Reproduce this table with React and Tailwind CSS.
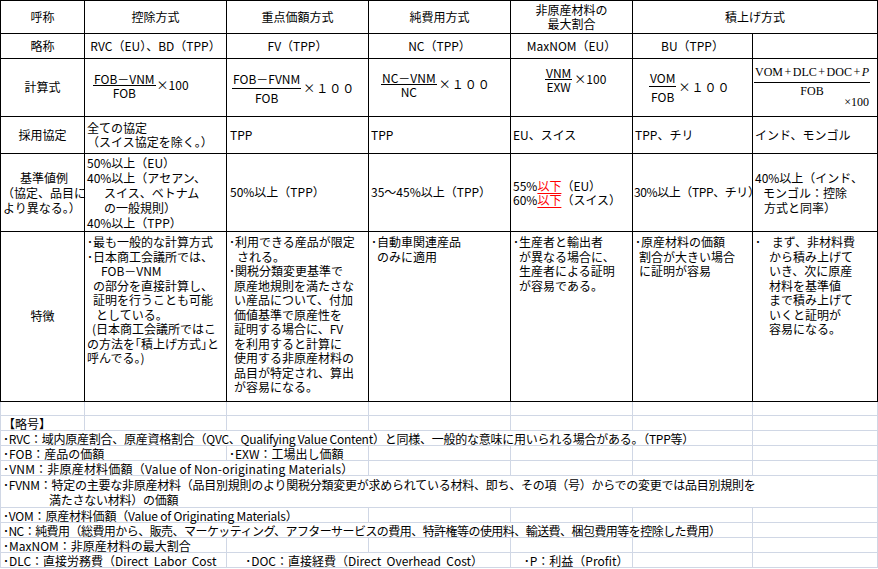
const jp = "font-['Noto_Sans_CJK_JP',sans-serif]";

function Lines({ items, className = "" }) {
  return (
    <div className={className}>
      {items.map(([t, ind, cls], i) => (
        <div key={i} className={"whitespace-pre " + (cls || "")} style={{ paddingLeft: ind || 0 }}>
          {t}
        </div>
      ))}
    </div>
  );
}

function Frac({ num, den, numClass = "", denClass = "" }) {
  return (
    <span className="inline-flex flex-col items-center leading-[13px]">
      <span className={"px-[1px] whitespace-nowrap " + numClass}>{num}</span>
      <span className="self-stretch border-t border-black" />
      <span className={denClass}>{den}</span>
    </span>
  );
}

const Red = ({ children }) => <span className="text-[#ff0000] underline underline-offset-2">{children}</span>;
const Plus = () => <span className="mx-[1.5px]">+</span>;

const td = "border border-black p-0 align-middle";
const tdTop = "border border-black p-0 align-top";
const g = "border border-[#d0d7e5] p-0 align-middle whitespace-pre pl-[2px]";

const lower = [
  { h: "h-[14px]", cells: [[1], [1], [1], [1], [1], [1], [1]] },
  { h: "h-[15px]", cells: [[1, "【略号】"], [1], [1], [1], [1], [1], [1]] },
  {
    h: "h-[15px]",
    cells: [[6, "･RVC：域内原産割合、原産資格割合（QVC、Qualifying Value Content）と同様、一般的な意味に用いられる場合がある。（TPP等）", "tracking-[-0.25px]"], [1]],
  },
  { h: "h-[15px]", cells: [[2, "･FOB：産品の価額"], [1, "･EXW：工場出し価額"], [1], [1], [1], [1]] },
  { h: "h-[15px]", cells: [[3, "･VNM：非原産材料価額（Value of Non-originating Materials）", "tracking-[0.2px]"], [1], [1], [1], [1]] },
  { h: "h-[32px]", fvnm: true, cells: [[7]] },
  { h: "h-[15px]", cells: [[3, "･VOM：原産材料価額（Value of Originating Materials）", "tracking-[-0.2px]"], [1], [1], [1], [1]] },
  {
    h: "h-[15px]",
    cells: [[6, "･NC：純費用（総費用から、販売、マーケッティング、アフターサービスの費用、特許権等の使用料、輸送費、梱包費用等を控除した費用）", "tracking-[-0.55px]"], [1]],
  },
  { h: "h-[15px]", cells: [[2, "･MaxNOM：非原産材料の最大割合"], [1], [1], [1], [1], [1]] },
  {
    h: "h-[15px]",
    cells: [[2, "･DLC：直接労務費（Direct  Labor  Cost"], [2, "      ･DOC：直接経費（Direct  Overhead  Cost）"], [1, "    ･P：利益（Profit）"], [1], [1]],
  },
];

export default function App() {
  return (
    <div className={"bg-white w-[878px] h-[569px] overflow-hidden text-black " + jp}>
      <table className="border-collapse table-fixed w-[877px] text-[12px] leading-[14.5px]">
        <colgroup>
          <col className="w-[84px]" />
          <col className="w-[142px]" />
          <col className="w-[142px]" />
          <col className="w-[142px]" />
          <col className="w-[122px]" />
          <col className="w-[120px]" />
          <col className="w-[125px]" />
        </colgroup>
        <tbody>
          <tr className="h-[33px] text-center">
            <td className={td}>呼称</td>
            <td className={td}>控除方式</td>
            <td className={td}>重点価額方式</td>
            <td className={td}>純費用方式</td>
            <td className={td + " leading-[14px]"}>
              非原産材料の
              <br />
              最大割合
            </td>
            <td className={td} colSpan={2}>積上げ方式</td>
          </tr>
          <tr className="h-[25px] text-center">
            <td className={td}>略称</td>
            <td className={td}>RVC（EU）、BD（TPP）</td>
            <td className={td}>FV（TPP）</td>
            <td className={td}>NC（TPP）</td>
            <td className={td}>MaxNOM（EU）</td>
            <td className={td}>BU（TPP）</td>
            <td className={td}></td>
          </tr>
          <tr className="h-[58px]">
            <td className={td + " text-center"}>計算式</td>
            <td className={tdTop}>
              <div className="pl-[8px] pt-[13px] flex items-center gap-[1px]">
                <Frac num="FOB－VNM" den="FOB" />
                <span>×100</span>
              </div>
            </td>
            <td className={tdTop}>
              <div className="pl-[5px] pt-[13px] flex items-center gap-[2px]">
                <Frac num="FOB－FVNM" den="FOB" numClass="pb-[3px]" denClass="pt-[2px]" />
                <span className="tracking-[1px]">×１００</span>
              </div>
            </td>
            <td className={tdTop}>
              <div className="pl-[12px] pt-[12px] flex items-center gap-[2px]">
                <Frac num="NC－VNM" den="NC" />
                <span className="tracking-[1px]">×１００</span>
              </div>
            </td>
            <td className={tdTop}>
              <div className="pl-[34px] pt-[7px] flex items-center gap-[2px]">
                <Frac num="VNM" den="EXW" />
                <span>×100</span>
              </div>
            </td>
            <td className={tdTop}>
              <div className="pl-[16px] pt-[12px] flex items-center gap-[2px]">
                <Frac num="VOM" den="FOB" numClass="pb-[2px]" denClass="pt-[3px]" />
                <span className="tracking-[1px]">×１００</span>
              </div>
            </td>
            <td className={tdTop}>
              <div className="pt-[6px] pl-[1px] pr-[8px] font-['Liberation_Serif',serif] text-[12px]">
                <Frac
                  num={
                    <>
                      VOM<Plus />DLC<Plus />DOC<Plus />
                      <i>P</i>
                    </>
                  }
                  den="FOB"
                  numClass="pb-[3px]"
                  denClass="pt-[2px]"
                />
                <div className="text-right leading-[13px] -mt-[2px]">×100</div>
              </div>
            </td>
          </tr>
          <tr className="h-[37px]">
            <td className={td + " text-center"}>採用協定</td>
            <td className={td + " pl-[2px]"}>
              <Lines items={[["全ての協定"], ["（スイス協定を除く。）"]]} />
            </td>
            <td className={td + " pl-[3px]"}>TPP</td>
            <td className={td + " pl-[2px]"}>TPP</td>
            <td className={td + " pl-[2px]"}>EU、スイス</td>
            <td className={td + " pl-[2px]"}>TPP、チリ</td>
            <td className={td + " pl-[2px]"}>インド、モンゴル</td>
          </tr>
          <tr className="h-[78px]">
            <td className={td + " leading-[15px]"}>
              <Lines items={[["基準値例", 19], ["（協定、品目に", 1], ["より異なる。）", 2]]} />
            </td>
            <td className={td + " pl-[2px] leading-[15px]"}>
              <Lines
                items={[["50%以上（EU）"], ["40%以上（アセアン、"], ["スイス、ベトナム", 17], ["の一般規則）", 17], ["40%以上（TPP）"]]}
              />
            </td>
            <td className={td + " pl-[3px]"}>50%以上（TPP）</td>
            <td className={td + " pl-[2px]"}>35～45%以上（TPP）</td>
            <td className={td + " pl-[2px] leading-[14px]"}>
              <div className="whitespace-nowrap">
                55%<Red>以下</Red>（EU）
              </div>
              <div className="whitespace-nowrap">
                60%<Red>以下</Red>（スイス）
              </div>
            </td>
            <td className={td + " pl-[1px] whitespace-nowrap tracking-[-0.4px]"}>30%以上（TPP、チリ）</td>
            <td className={td + " pl-[2px] leading-[15px]"}>
              <Lines items={[["40%以上（インド、"], ["モンゴル：控除", 8], ["方式と同率）", 9]]} />
            </td>
          </tr>
          <tr className="h-[170px]">
            <td className={td + " text-center"}>特徴</td>
            <td className={tdTop + " pl-[2px] pt-[3px]"}>
              <Lines
                items={[
                  ["･最も一般的な計算方式"],
                  ["･日本商工会議所では、"],
                  ["FOB－VNM", 14],
                  ["の部分を直接計算し、", 6],
                  ["証明を行うことも可能", 6],
                  ["としている。", 9],
                  ["(日本商工会議所ではこ", 5],
                  ["の方法を｢積上げ方式｣と"],
                  ["呼んでる。)"],
                ]}
              />
            </td>
            <td className={tdTop + " pl-[2px] pt-[3px]"}>
              <Lines
                items={[
                  ["･利用できる産品が限定"],
                  ["される。", 8],
                  ["･関税分類変更基準で"],
                  ["原産地規則を満たさな", 5],
                  ["い産品について、付加", 5],
                  ["価値基準で原産性を", 5],
                  ["証明する場合に、FV", 5],
                  ["を利用すると計算に", 5],
                  ["使用する非原産材料の", 5],
                  ["品目が特定され、算出", 5],
                  ["が容易になる。", 5],
                ]}
              />
            </td>
            <td className={tdTop + " pl-[2px] pt-[3px]"}>
              <Lines items={[["･自動車関連産品"], ["のみに適用", 6]]} />
            </td>
            <td className={tdTop + " pl-[2px] pt-[3px]"}>
              <Lines items={[["･生産者と輸出者"], ["が異なる場合に、", 6], ["生産者による証明", 6], ["が容易である。", 6]]} />
            </td>
            <td className={tdTop + " pl-[2px] pt-[3px]"}>
              <Lines items={[["･原産材料の価額"], ["割合が大きい場合", 4], ["に証明が容易", 4]]} />
            </td>
            <td className={tdTop + " pl-[2px] pt-[3px]"}>
              <Lines
                items={[
                  ["･    まず、非材料費"],
                  ["から積み上げて", 14],
                  ["いき、次に原産", 14],
                  ["材料を基準値", 14],
                  ["まで積み上げて", 14],
                  ["いくと証明が", 14],
                  ["容易になる。", 14],
                ]}
              />
            </td>
          </tr>
          {lower.map((r, ri) => (
            <tr key={ri} className={r.h}>
              {r.fvnm ? (
                <td colSpan={7} className={g + " leading-[15px] tracking-[-0.25px]"}>
                  <div>･FVNM：特定の主要な非原産材料（品目別規則のより関税分類変更が求められている材料、即ち、その項（号）からでの変更では品目別規則を</div>
                  <div className="pl-[46px]">満たさない材料）の価額</div>
                </td>
              ) : (
                r.cells.map(([span, text, cls], ci) => (
                  <td key={ci} colSpan={span} className={g + " leading-[13px] " + (cls || "")}>
                    {text || ""}
                  </td>
                ))
              )}
            </tr>
          ))}
        </tbody>
      </table>
    </div>
  );
}
